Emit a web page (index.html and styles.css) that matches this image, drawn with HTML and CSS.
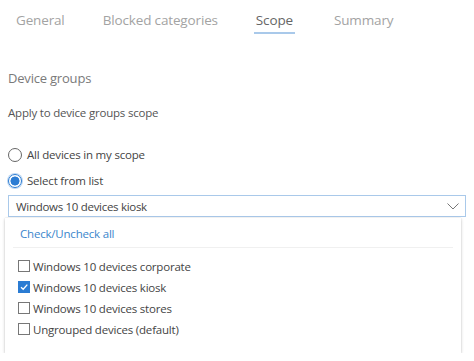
FILE: index.html
```html
<!DOCTYPE html>
<html>
<head>
<meta charset="utf-8">
<link rel="stylesheet" href="styles.css">
</head>
<body>
<div class="page">
  <nav class="tabs">
    <span class="tab">General</span>
    <span class="tab">Blocked categories</span>
    <span class="tab active">Scope</span>
    <span class="tab last">Summary</span>
  </nav>
  <h2 class="section-title">Device groups</h2>
  <p class="label">Apply to device groups scope</p>
  <div class="radios">
    <label class="radio"><span class="circle"></span>All devices in my scope</label>
    <label class="radio"><span class="circle on"></span>Select from list</label>
  </div>
  <div class="select">
    <span>Windows 10 devices kiosk</span>
    <svg class="chev" width="12" height="7" viewBox="0 0 12 7"><path d="M0.5 0.5 L6 6 L11.5 0.5" fill="none" stroke="#777" stroke-width="1"/></svg>
  </div>
  <div class="menu">
    <div class="all">Check/Uncheck all</div>
    <div class="items">
      <div class="item"><span class="box"></span>Windows 10 devices corporate</div>
      <div class="item"><span class="box checked"><svg width="10" height="10" viewBox="0 0 10 10"><path d="M2 5.2 L4.2 7.3 L8.3 2.6" fill="none" stroke="#fff" stroke-width="1.3"/></svg></span>Windows 10 devices kiosk</div>
      <div class="item"><span class="box"></span>Windows 10 devices stores</div>
      <div class="item"><span class="box"></span>Ungrouped devices (default)</div>
    </div>
  </div>
</div>
</body>
</html>
```
FILE: styles.css
```css
* { box-sizing: border-box; }
html, body { margin: 0; padding: 0; background: #fff; }
body {
  font-family: "Open Sans", "Noto Sans", sans-serif;
  color: #444;
}
.page { padding: 0 8px; width: 474px; }
.tabs {
  display: flex;
  gap: 38px;
  padding: 10px 0 0 8px;
  height: 34px;
}
.tab {
  font-size: 13.5px;
  letter-spacing: -0.15px;
  line-height: 20px;
  color: #a3a3a3;
  height: 24px;
}
.tab.active {
  color: #666;
  border-bottom: 2px solid #a9c9ea;
  padding: 0 2px;
  margin: 0 -2px;
}
.tab.last { margin-left: 3px; }
.section-title {
  margin: 35px 0 0 0;
  font-size: 13px;
  letter-spacing: -0.2px;
  font-weight: normal;
  line-height: 18px;
  color: #7a7a7a;
}
.label {
  margin: 17px 0 0 0;
  font-size: 11.5px;
  letter-spacing: -0.2px;
  line-height: 18px;
  color: #555;
}
.radios {
  margin-top: 24px;
  display: flex;
  flex-direction: column;
  gap: 8px;
}
.radio {
  display: flex;
  align-items: center;
  font-size: 11.5px;
  letter-spacing: -0.2px;
  line-height: 18px;
  color: #444;
  gap: 5px;
}
.circle {
  width: 14px;
  height: 14px;
  border: 1px solid #666;
  border-radius: 50%;
  display: inline-block;
}
.circle.on {
  border-color: #2b7cd3;
  background: radial-gradient(circle, #2b7cd3 0 4.2px, #fff 4.8px);
  box-shadow: 0 0 0 1px #bcd6f2;
}
.select {
  margin-top: 5px;
  height: 22px;
  width: 458px;
  border: 1px solid #a9c9ea;
  display: flex;
  align-items: center;
  justify-content: space-between;
  padding: 0 6px 0 7px;
  font-size: 11.5px;
  letter-spacing: -0.3px;
  color: #444;
}
.menu {
  margin: 1px 0 0 -3px;
  width: 456px;
  height: 135px;
  background: #fff;
  box-shadow: 0 1px 3px rgba(0,0,0,0.22), 0 0 1px rgba(0,0,0,0.12);
  padding: 0 8px;
}
.all {
  height: 30px;
  padding: 7px 0 0 7px;
  font-size: 11.5px;
  letter-spacing: -0.2px;
  line-height: 18px;
  color: #3b86cc;
  border-bottom: 1px solid #f0f0f0;
}
.items { padding: 9px 0 0 5px; display: flex; flex-direction: column; gap: 3px; }
.item {
  display: flex;
  align-items: center;
  gap: 3px;
  height: 18px;
  font-size: 11.5px;
  letter-spacing: -0.2px;
  color: #444;
}
.box {
  width: 12px;
  height: 12px;
  border: 1px solid #777;
  display: inline-flex;
  align-items: center;
  justify-content: center;
}
.box.checked { background: #2b7cd3; border-color: #2b7cd3; }
```
